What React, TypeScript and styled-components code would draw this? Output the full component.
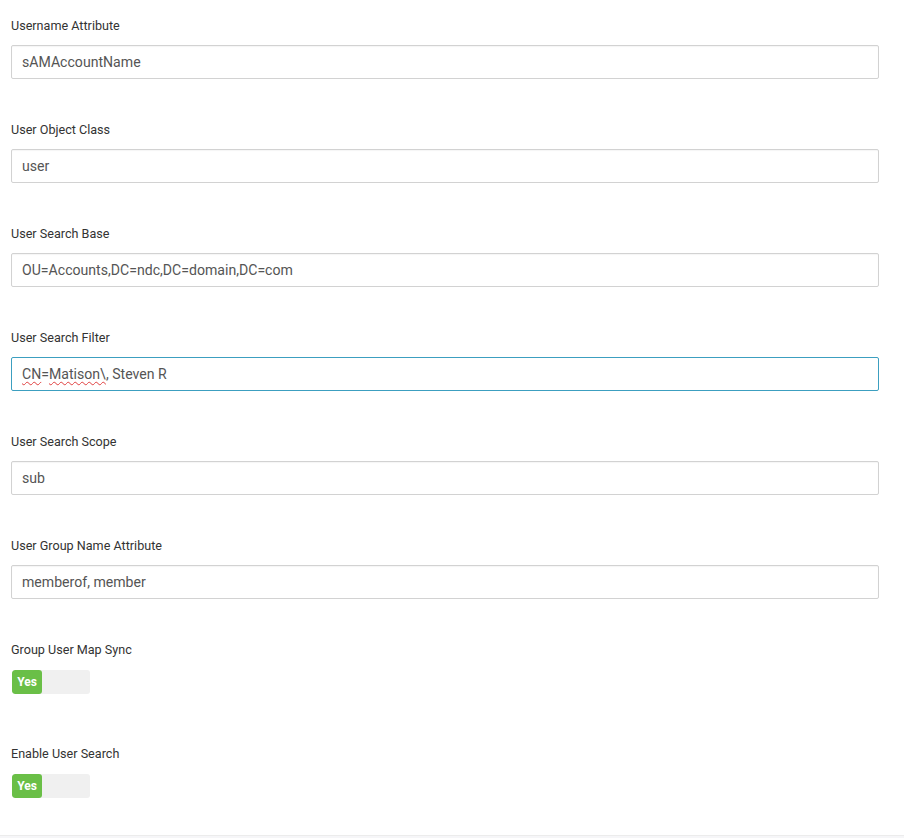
import styled, { createGlobalStyle } from "styled-components";

const GlobalStyle = createGlobalStyle`
  html, body {
    margin: 0;
    padding: 0;
    background: #ffffff;
  }
  body {
    font-family: Roboto, "Liberation Sans", Arial, sans-serif;
  }
`;

const Page = styled.div`
  width: 904px;
  height: 838px;
  overflow: hidden;
  display: flex;
  flex-direction: column;
`;

const Form = styled.form`
  flex: 1;
  min-height: 0;
  overflow: hidden;
  padding: 17px 25px 0 11px;
  display: flex;
  flex-direction: column;
`;

const Group = styled.div`
  display: flex;
  flex-direction: column;
  flex-shrink: 0;
  height: 104px;
`;

const Label = styled.label<{ $gap?: number }>`
  font-size: 12.6px;
  line-height: 17px;
  color: #333333;
  margin-bottom: ${(p) => p.$gap ?? 11}px;
`;

const Input = styled.input<{ $focused?: boolean }>`
  box-sizing: border-box;
  width: 868px;
  height: 34px;
  padding: 0 10px;
  font-family: Roboto, "Liberation Sans", Arial, sans-serif;
  font-size: 14.1px;
  color: #555555;
  background: #ffffff;
  border: 1px solid ${(p) => (p.$focused ? "#3c9fc0" : "#d2d2d2")};
  border-radius: 2px;
  box-shadow: inset 0 1px 1px rgba(0, 0, 0, 0.04);
  outline: none;
`;

const Squiggle = styled.span`
  text-decoration: underline wavy #e04040;
  text-decoration-thickness: 1px;
  text-underline-offset: 2px;
`;

const FakeInput = styled.div<{ $focused?: boolean }>`
  box-sizing: border-box;
  width: 868px;
  height: 34px;
  padding: 0 10px;
  display: flex;
  align-items: center;
  font-size: 14.1px;
  color: #555555;
  background: #ffffff;
  border: 1px solid ${(p) => (p.$focused ? "#3c9fc0" : "#d2d2d2")};
  border-radius: 2px;
  white-space: pre;
`;

const Toggle = styled.div`
  display: flex;
  width: 78px;
  height: 24px;
  margin-left: 1px;
  border-radius: 3px;
  background: #f0f0f0;
  overflow: hidden;
`;

const ToggleOn = styled.span`
  width: 30px;
  display: flex;
  align-items: center;
  justify-content: center;
  background: #6abf47;
  color: #ffffff;
  font-size: 12px;
  font-weight: 700;
  border-radius: 3px;
`;

const Footer = styled.div`
  flex-shrink: 0;
  height: 2px;
  border-top: 1px solid #ececec;
  background: #f6f6f8;
`;

const fields = [
  { label: "Username Attribute", value: "sAMAccountName" },
  { label: "User Object Class", value: "user" },
  { label: "User Search Base", value: "OU=Accounts,DC=ndc,DC=domain,DC=com" },
];

const fields2 = [
  { label: "User Search Scope", value: "sub" },
  { label: "User Group Name Attribute", value: "memberof, member" },
];

const toggles = ["Group User Map Sync", "Enable User Search"];

export default function App() {
  return (
    <>
      <GlobalStyle />
      <Page>
        <Form>
          {fields.map((f) => (
            <Group key={f.label}>
              <Label>{f.label}</Label>
              <Input defaultValue={f.value} readOnly />
            </Group>
          ))}
          <Group>
            <Label>User Search Filter</Label>
            <FakeInput $focused>
              <Squiggle>CN</Squiggle>=<Squiggle>Matison\</Squiggle>, Steven R
            </FakeInput>
          </Group>
          {fields2.map((f) => (
            <Group key={f.label}>
              <Label>{f.label}</Label>
              <Input defaultValue={f.value} readOnly />
            </Group>
          ))}
          {toggles.map((t) => (
            <Group key={t}>
              <Label $gap={12}>{t}</Label>
              <Toggle>
                <ToggleOn>Yes</ToggleOn>
              </Toggle>
            </Group>
          ))}
        </Form>
        <Footer />
      </Page>
    </>
  );
}
